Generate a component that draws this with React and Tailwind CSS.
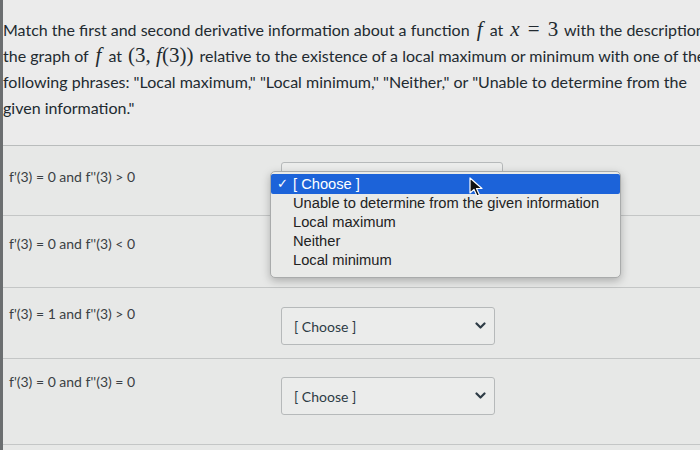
import React from 'react';

const math = { fontFamily: '"Liberation Serif", "DejaVu Serif", serif' };

const Chevron = () => (
  <svg width="11" height="8" viewBox="0 0 11 8" className="text-[#2d3b45]">
    <path d="M1.5 1.5 L5.5 5.5 L9.5 1.5" fill="none" stroke="currentColor" strokeWidth="2.2" strokeLinecap="round" strokeLinejoin="round" />
  </svg>
);

const Select = ({ className = '' }) => (
  <div className={`w-[214px] h-[38px] flex items-center justify-between pl-3 pr-2 border border-[#b6b9ba] rounded-[3px] bg-[#ebeceb] ${className}`}>
    <span className="text-[14px] text-[#2d3b45]">[ Choose ]</span>
    <Chevron />
  </div>
);

const Row = ({ label, children, pad = 'pt-[22px]', h = 'h-[71px]' }) => (
  <div className={`relative flex border-b border-[#c4c6c6] ${h} ${pad}`}>
    <div className="w-[278px] pl-[6px] text-[14px] text-[#3a3f44] leading-[18px]">{label}</div>
    {children}
  </div>
);

const Cursor = () => (
  <svg width="16" height="20" viewBox="0 0 16 20" className="absolute left-[466px] top-[177px] z-30">
    <path d="M1 1 L1 16 L5 12.5 L8 19 L10.5 18 L7.5 11.5 L13 11.5 Z" fill="#111" stroke="#fff" strokeWidth="1.2" strokeLinejoin="round" />
  </svg>
);

const M = ({ children, className = '' }) => (
  <span style={math} className={`text-[21px] leading-none ${className}`}>{children}</span>
);

export default function App() {
  const options = ['Unable to determine from the given information', 'Local maximum', 'Neither', 'Local minimum'];
  return (
    <div className="relative w-[700px] h-[450px] overflow-hidden bg-[#e7e8e7] border-l-[3px] border-[#6b6e70]" style={{ fontFamily: 'Lato, "Open Sans", sans-serif' }}>
      <div className="pt-[17px] pb-[24px] text-[16px] leading-[26px] text-[#222a30] whitespace-nowrap bg-[#ebebeb]">
        <div className="h-[26px]">
          Match the first and second derivative information about a function <M className="italic mx-[3px]">f</M> at{' '}
          <M className="italic ml-[3px]">x</M> <M className="mx-[4px]">=</M> <M className="mr-[2px]">3</M> with the description
        </div>
        <div className="h-[26px]">
          the graph of <M className="italic mx-[3px]">f</M> at <M className="mx-[2px]">(3, <i>f</i>(3))</M> relative to the existence of a local maximum or minimum with one of the
        </div>
        <div className="h-[26px]">following phrases: "Local maximum," "Local minimum," "Neither," or "Unable to determine from the</div>
        <div className="h-[26px]">given information."</div>
      </div>
      <div className="border-t border-[#b9bcbc]">
        <Row label="f'(3) = 0 and f''(3) > 0" pad="pt-[22px]" h="h-[70px]">
          <Select className="absolute left-[278px] top-[16px] w-[222px]" />
        </Row>
        <Row label="f'(3) = 0 and f''(3) < 0" pad="pt-[19px]" h="h-[72px]">
          <Select className="absolute left-[278px] top-[20px]" />
        </Row>
        <Row label="f'(3) = 1 and f''(3) > 0" pad="pt-[17px]" h="h-[71px]">
          <Select className="mt-[2px]" />
        </Row>
        <Row label="f'(3) = 0 and f''(3) = 0" pad="pt-[14px]" h="h-[86px]">
          <Select className="mt-[4px]" />
        </Row>
      </div>

      <div className="absolute left-[267px] top-[171px] z-20 w-[351px] h-[107px] rounded-[5px] border border-[#a9abab] bg-[#e9eae8] shadow-[0_3px_8px_rgba(0,0,0,0.25)] py-[2px] text-[14.7px] text-[#222]" style={{ fontFamily: '"Liberation Sans", Arial, sans-serif' }}>
        <div className="h-[20px] flex items-center bg-[#1c63d9] text-white rounded-[2px]">
          <span className="w-[20px] pl-[6px] text-[13px]">✓</span>
          <span className="pl-[2px]">[ Choose ]</span>
        </div>
        {options.map((o) => (
          <div key={o} className="h-[19px] flex items-center pl-[22px]">{o}</div>
        ))}
      </div>
      <Cursor />
    </div>
  );
}
